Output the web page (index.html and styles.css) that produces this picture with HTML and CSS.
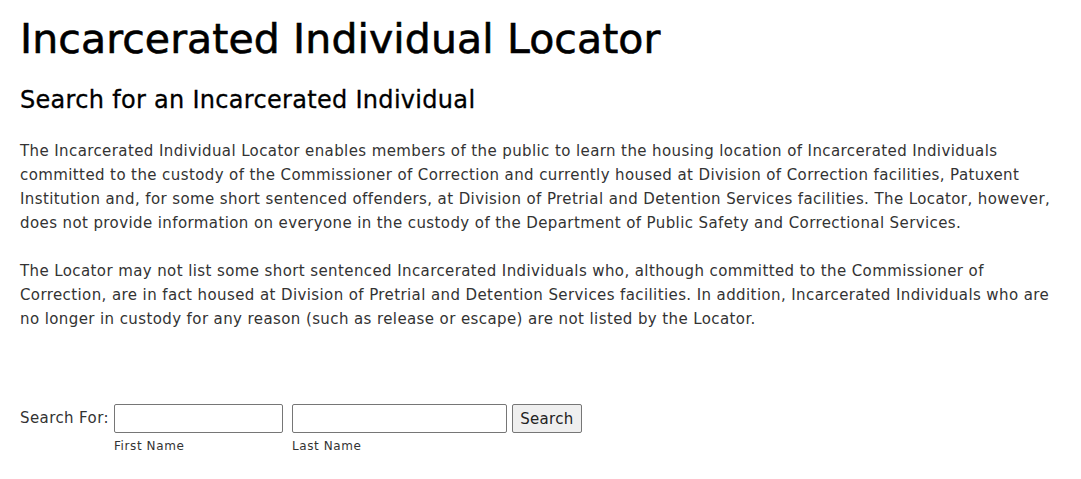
FILE: index.html
```html
<!DOCTYPE html>
<html lang="en">
<head>
<meta charset="utf-8">
<title>Incarcerated Individual Locator</title>
<link rel="stylesheet" href="styles.css">
</head>
<body>
<main class="page">
  <h1 class="title">Incarcerated Individual Locator</h1>
  <h2 class="subtitle">Search for an Incarcerated Individual</h2>
  <p class="text">The Incarcerated Individual Locator enables members of the public to learn the housing location of Incarcerated Individuals committed to the custody of the Commissioner of Correction and currently housed at Division of Correction facilities, Patuxent Institution and, for some short sentenced offenders, at Division of Pretrial and Detention Services facilities. The Locator, however, does not provide information on everyone in the custody of the Department of Public Safety and Correctional Services.</p>
  <p class="text">The Locator may not list some short sentenced Incarcerated Individuals who, although committed to the Commissioner of Correction, are in fact housed at Division of Pretrial and Detention Services facilities. In addition, Incarcerated Individuals who are no longer in custody for any reason (such as release or escape) are not listed by the Locator.</p>
  <form class="search" onsubmit="return false;">
    <span class="search-label">Search For:</span>
    <label class="field field-first">
      <input class="input" type="text" name="first">
      <span class="hint">First Name</span>
    </label>
    <label class="field field-last">
      <input class="input" type="text" name="last">
      <span class="hint">Last Name</span>
    </label>
    <button class="btn" type="submit">Search</button>
  </form>
</main>
</body>
</html>
```

FILE: styles.css
```css
html, body {
  margin: 0;
  padding: 0;
  background: #fff;
}
body {
  font-family: "DejaVu Sans", "Noto Sans", sans-serif;
  color: #333;
}
.page {
  padding: 16px 0 0 20px;
}
.title {
  margin: 0;
  font-size: 41px;
  font-weight: 500;
  letter-spacing: 0.1px;
  line-height: 46px;
  color: #000;
  -webkit-text-stroke: 0.6px #000;
}
.subtitle {
  margin: 23px 0 0;
  font-size: 24px;
  font-weight: 500;
  letter-spacing: 0.3px;
  line-height: 30px;
  color: #000;
  -webkit-text-stroke: 0.3px #000;
}
.text {
  max-width: 1052px;
  margin: 24px 0 0;
  font-size: 15px;
  letter-spacing: 0.4px;
  line-height: 24px;
}
.text + .text {
  margin-top: 24px;
}
.search {
  display: flex;
  align-items: flex-start;
  margin-top: 73px;
}
.search-label {
  font-size: 15px;
  letter-spacing: 0.4px;
  line-height: 29px;
  margin-right: 5px;
}
.field {
  display: flex;
  flex-direction: column;
}
.field-first { width: 169px; margin-right: 9px; }
.field-last { width: 215px; margin-right: 5px; }
.input {
  box-sizing: border-box;
  height: 29px;
  width: 100%;
  margin: 0;
  border: 1px solid #767676;
  border-radius: 2px;
  background: #fff;
}
.hint {
  margin-top: 5px;
  font-size: 12px;
  letter-spacing: 0.6px;
  line-height: 16px;
  color: #333;
}
.btn {
  box-sizing: border-box;
  height: 29px;
  width: 70px;
  padding: 0;
  font-family: inherit;
  font-size: 15px;
  letter-spacing: 0.3px;
  color: #222;
  background: #efefef;
  border: 1px solid #767676;
  border-radius: 2px;
}
```
